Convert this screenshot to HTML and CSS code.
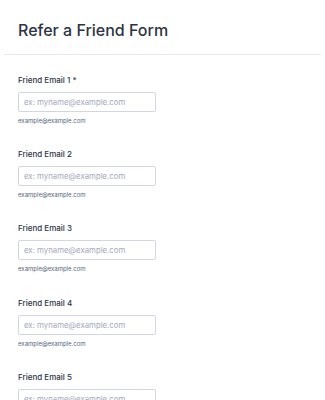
FILE: index.html
```html
<!DOCTYPE html>
<html lang="en">
<head>
<meta charset="utf-8">
<title>Refer a Friend Form</title>
<link rel="stylesheet" href="styles.css">
</head>
<body>
<div class="form">
  <header class="form-header">
    <h1 class="form-title">Refer a Friend Form</h1>
  </header>
  <ul class="fields">
    <li class="field">
      <label class="field-label">Friend Email 1 <span class="req">*</span></label>
      <input class="field-input" type="email" placeholder="ex: myname@example.com">
      <div class="field-sub">example@example.com</div>
    </li>
    <li class="field">
      <label class="field-label">Friend Email 2</label>
      <input class="field-input" type="email" placeholder="ex: myname@example.com">
      <div class="field-sub">example@example.com</div>
    </li>
    <li class="field">
      <label class="field-label">Friend Email 3</label>
      <input class="field-input" type="email" placeholder="ex: myname@example.com">
      <div class="field-sub">example@example.com</div>
    </li>
    <li class="field">
      <label class="field-label">Friend Email 4</label>
      <input class="field-input" type="email" placeholder="ex: myname@example.com">
      <div class="field-sub">example@example.com</div>
    </li>
    <li class="field">
      <label class="field-label">Friend Email 5</label>
      <input class="field-input" type="email" placeholder="ex: myname@example.com">
      <div class="field-sub">example@example.com</div>
    </li>
  </ul>
</div>
</body>
</html>
```
FILE: styles.css
```css
html, body {
  margin: 0;
  padding: 0;
  background: #ffffff;
  overflow: hidden;
}
body {
  font-family: Inter, "Noto Sans", Arial, sans-serif;
  color: #2c3345;
}
.form {
  padding: 0 4px;
}
.form-header {
  padding: 20px 14px 14px;
  border-bottom: 1px solid #e6e8ef;
}
.form-title {
  margin: 0;
  font-size: 16px;
  line-height: 20px;
  font-weight: 500;
  color: #2c3345;
}
.fields {
  list-style: none;
  margin: 0;
  padding: 20px 14px 0;
  display: flex;
  flex-direction: column;
  gap: 24.2px;
}
.field {
  display: flex;
  flex-direction: column;
  align-items: flex-start;
}
.field-label {
  font-size: 8px;
  line-height: 10px;
  font-weight: 500;
  color: #2c3345;
}
.req {
  color: #2c3345;
}
.field-input {
  box-sizing: border-box;
  margin: 7px 0 0;
  width: 138px;
  height: 20px;
  padding: 0 5px;
  border: 1px solid #d3d6e2;
  border-radius: 2px;
  background: #fff;
  font-family: inherit;
  font-size: 7.8px;
  color: #2c3345;
  outline: none;
}
.field-input::placeholder {
  color: #a3a8ba;
}
.field-sub {
  margin-top: 5px;
  font-size: 6px;
  line-height: 8px;
  color: #57647e;
}
```
